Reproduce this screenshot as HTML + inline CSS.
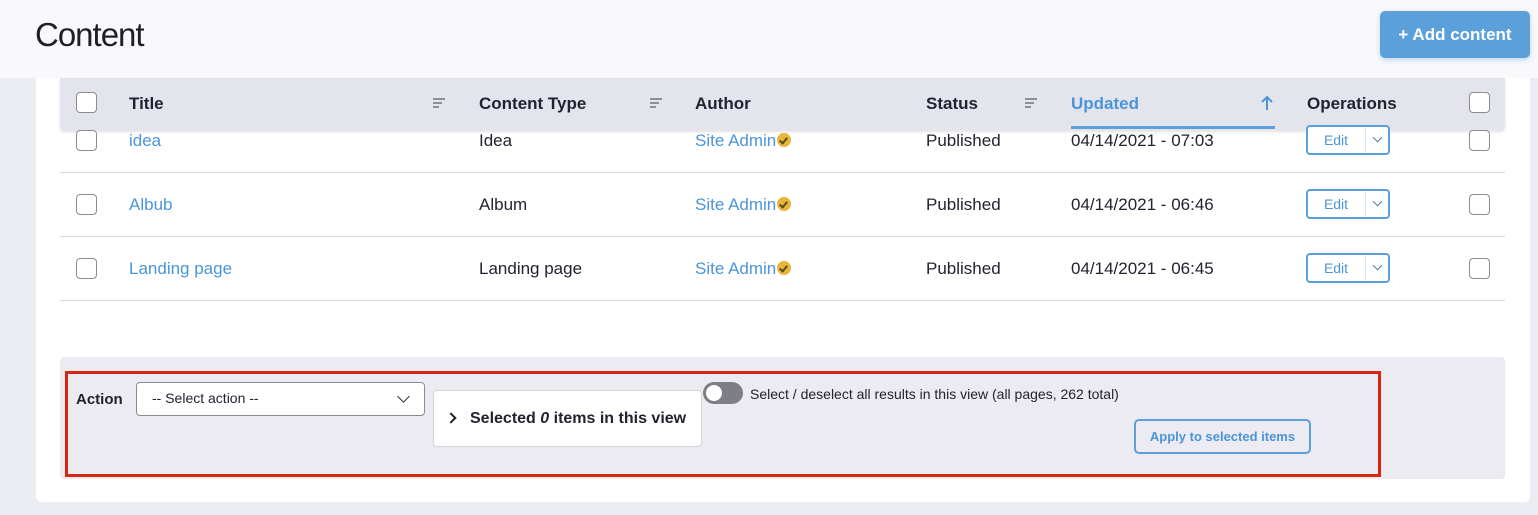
<!DOCTYPE html>
<html><head><meta charset="utf-8"><style>
*{box-sizing:border-box;margin:0;padding:0}
body{width:1538px;height:515px;background:#ecedf2;font-family:"Liberation Sans",sans-serif;position:relative;overflow:hidden;color:#222330}
.a{position:absolute}
.card{left:36px;top:40px;width:1494px;height:462px;background:#fff;border-radius:6px}
.top{left:0;top:0;width:1538px;height:78px;background:#f9f9fc}
h1{position:absolute;left:35px;top:16px;font-size:33px;font-weight:400;letter-spacing:-1px;color:#1f1f28}
.add{left:1380px;top:11px;width:150px;height:47px;background:#5b9fdb;border-radius:5px;color:#fff;font-weight:700;font-size:17px;line-height:47px;text-align:center;box-shadow:0 2px 6px rgba(90,150,210,.35)}
.thead{left:60px;top:78px;width:1445px;height:52px;background:#e4e5ec;border-radius:0 0 4px 4px;box-shadow:0 2px 3px rgba(0,0,0,.12)}
.th{font-weight:700;font-size:17px;top:94px}
.cb{width:21px;height:21px;border:1.5px solid #8a8b94;border-radius:4px;background:#fff}
.sort{width:12px;height:10px}
.sort i{display:block;height:2px;background:#8e8f99;margin-bottom:2px}
.td{font-size:17px;top:0}
.link{color:#4a95d9}
.line{left:60px;width:1445px;height:1px;background:#d8d8dc}
.ver{display:inline-block;width:14px;height:14px;border-radius:50%;background:#e9b43a;vertical-align:-1px;margin-left:1px;position:relative}
.ver:after{content:"";position:absolute;left:4px;top:2.5px;width:3px;height:6px;border:solid #5a4a20;border-width:0 2px 2px 0;transform:rotate(40deg)}
.edit{width:84px;height:30px;border:2px solid #5b9fdb;border-radius:4px;background:#fff}
.edit span{position:absolute;left:0;width:56px;text-align:center;color:#4a95d9;font-size:14px;line-height:26px}
.edit b{position:absolute;left:57px;top:2px;width:1px;height:22px;background:#d6e5f4}
.chev{position:absolute;width:7px;height:7px;border:solid #4a7fb8;border-width:0 1.5px 1.5px 0;transform:rotate(45deg)}
</style></head><body>
<div class="a card"></div>
<div class="a top"></div>
<h1>Content</h1>
<div class="a add">+ Add content</div>
<div class="a thead"></div>
<div class="a cb" style="left:76px;top:92px"></div>
<div class="a th" style="left:129px">Title</div>
<div class="a sort" style="left:433px;top:98px"><i></i><i style="width:9px"></i><i style="width:6px"></i></div>
<div class="a th" style="left:479px">Content Type</div>
<div class="a sort" style="left:650px;top:98px"><i></i><i style="width:9px"></i><i style="width:6px"></i></div>
<div class="a th" style="left:695px">Author</div>
<div class="a th" style="left:926px">Status</div>
<div class="a sort" style="left:1025px;top:98px"><i></i><i style="width:9px"></i><i style="width:6px"></i></div>
<div class="a th" style="left:1071px;color:#4a95d9">Updated</div>
<svg class="a" style="left:1261px;top:95px" width="12" height="16"><path d="M6 15V2M1 7l5-5 5 5" stroke="#4a95d9" stroke-width="2" fill="none"/></svg>
<div class="a" style="left:1071px;top:126px;width:204px;height:3px;background:#5b9fdb"></div>
<div class="a th" style="left:1307px">Operations</div>
<div class="a cb" style="left:1469px;top:92px"></div>

<div class="a cb" style="left:76px;top:130px"></div>
<div class="a td link" style="left:129px;top:131px">idea</div>
<div class="a td" style="left:479px;top:131px">Idea</div>
<div class="a td link" style="left:695px;top:131px">Site Admin<span class="ver"></span></div>
<div class="a td" style="left:926px;top:131px">Published</div>
<div class="a td" style="left:1071px;top:131px">04/14/2021 - 07:03</div>
<div class="a edit" style="left:1306px;top:125px"><span>Edit</span><b></b><div class="chev" style="left:66px;top:7px"></div></div>
<div class="a cb" style="left:1469px;top:130px"></div>
<div class="a line" style="top:172px"></div>

<div class="a cb" style="left:76px;top:194px"></div>
<div class="a td link" style="left:129px;top:195px">Albub</div>
<div class="a td" style="left:479px;top:195px">Album</div>
<div class="a td link" style="left:695px;top:195px">Site Admin<span class="ver"></span></div>
<div class="a td" style="left:926px;top:195px">Published</div>
<div class="a td" style="left:1071px;top:195px">04/14/2021 - 06:46</div>
<div class="a edit" style="left:1306px;top:189px"><span>Edit</span><b></b><div class="chev" style="left:66px;top:7px"></div></div>
<div class="a cb" style="left:1469px;top:194px"></div>
<div class="a line" style="top:236px"></div>

<div class="a cb" style="left:76px;top:258px"></div>
<div class="a td link" style="left:129px;top:259px">Landing page</div>
<div class="a td" style="left:479px;top:259px">Landing page</div>
<div class="a td link" style="left:695px;top:259px">Site Admin<span class="ver"></span></div>
<div class="a td" style="left:926px;top:259px">Published</div>
<div class="a td" style="left:1071px;top:259px">04/14/2021 - 06:45</div>
<div class="a edit" style="left:1306px;top:253px"><span>Edit</span><b></b><div class="chev" style="left:66px;top:7px"></div></div>
<div class="a cb" style="left:1469px;top:258px"></div>
<div class="a line" style="top:300px"></div>

<div class="a" style="left:60px;top:357px;width:1445px;height:122px;background:#ebebf1;border-radius:4px"></div>
<div class="a" style="left:65px;top:371px;width:1316px;height:106px;border:3px solid #d9260f"></div>
<div class="a" style="left:76px;top:391px;font-weight:700;font-size:15px">Action</div>
<div class="a" style="left:136px;top:382px;width:289px;height:34px;background:#fff;border:1.5px solid #8a8b94;border-radius:4px;font-size:14px;line-height:31px;padding-left:15px">-- Select action --<div class="chev" style="left:262px;top:9px;width:9px;height:9px;border-color:#333"></div></div>
<div class="a" style="left:433px;top:390px;width:269px;height:57px;background:#fff;border:1px solid #d4d4da;border-radius:4px;font-weight:700;font-size:16px;line-height:55px;padding-left:36px">Selected <i>0</i> items in this view<div class="chev" style="left:13px;top:23px;width:8px;height:8px;border-color:#222;border-width:0 2px 2px 0;transform:rotate(-45deg)"></div></div>
<div class="a" style="left:703px;top:382px;width:40px;height:22px;border-radius:11px;background:#7d7e86"><div class="a" style="left:3px;top:3px;width:16px;height:16px;border-radius:50%;background:#fff"></div></div>
<div class="a" style="left:750px;top:386px;font-size:14px">Select / deselect all results in this view (all pages, 262 total)</div>
<div class="a" style="left:1134px;top:419px;width:177px;height:35px;border:2px solid #5b9fdb;border-radius:5px;color:#4a95d9;font-weight:700;font-size:13px;line-height:31px;text-align:center">Apply to selected items</div>
</body></html>
